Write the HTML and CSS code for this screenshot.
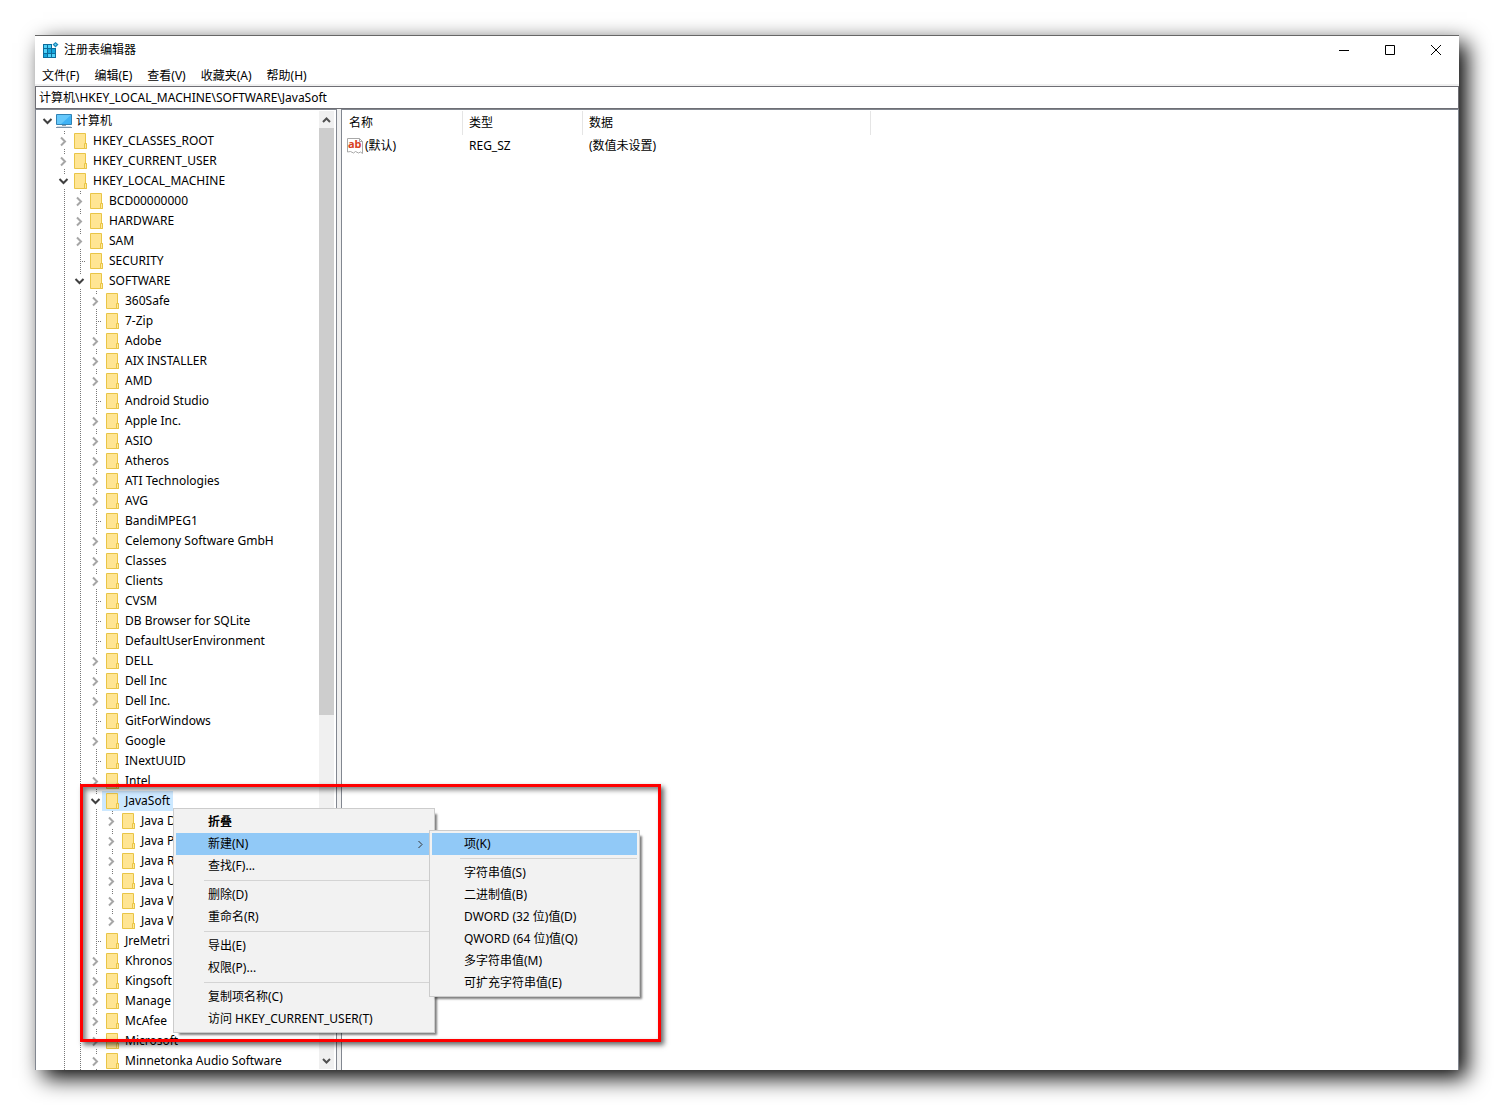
FILE: index.html
```html
<!DOCTYPE html>
<html lang="zh-CN">

<head>
    <meta charset="UTF-8">
    <meta name="viewport" content="width=device-width, initial-scale=1.0">
    <title>注册表编辑器</title>
    <link rel="stylesheet" href="styles.css">
</head>

<body>
    <!-- Shared icons -->
    <svg class="icon-sprite" width="0" height="0" aria-hidden="true">
        <symbol id="folder" viewBox="0 0 13 16">
            <path d="M.5.5h11v10h1v5h-12z" fill="#ffe593" stroke="#e9c547" />
            <path d="M10.5 15.500v-5h2v5z" fill="#ffe99f" stroke="#e9c547" />
        </symbol>
        <symbol id="closed" viewBox="0 0 14 14">
            <path d="M5 3.500l4 4-4 4" fill="none" stroke="#a6a6a6" stroke-width="2" />
        </symbol>
        <symbol id="open" viewBox="0 0 14 14">
            <path d="M3.500 5l4 4 4-4" fill="none" stroke="#404040" stroke-width="2" />
        </symbol>
    </svg>

    <div class="window">
        <header class="title-bar">
            <svg class="app-icon" width="16" height="16" viewBox="0 0 16 16">
                <path d="M0 2h9v4h4v10H0z" fill="#0c6c9c" />
                <path d="M1 3h3v3H1zM5 3h3v3H5zM1 7h3v4H1zM5 12h3v3H5zM9 12h3v3H9z" fill="#4fd0f7" />
                <path d="M5 7h3v4H5zM9 7h3v4H9zM1 12h3v3H1z" fill="#14a5dc" />
                <path d="M12.500 0l3 2.500-3 3-3-3z" fill="#1b87b8" />
                <path d="M12.500 1.500l1.200 1-1.200 1.200-1.200-1.200z" fill="#6fd8f7" />
            </svg>
            <h1>注册表编辑器</h1>
            <div class="window-buttons">
                <button type="button" aria-label="最小化">
                    <svg width="10" height="10" viewBox="0 0 10 10"><path d="M0 5.500h10" /></svg>
                </button>
                <button type="button" aria-label="最大化">
                    <svg width="10" height="10" viewBox="0 0 10 10"><path d="M.5.5h9v9h-9z" /></svg>
                </button>
                <button type="button" aria-label="关闭">
                    <svg width="10" height="10" viewBox="0 0 10 10"><path d="M0 0l10 10M10 0L0 10" /></svg>
                </button>
            </div>
        </header>

        <nav class="menu-bar">
            <button type="button">文件(F)</button>
            <button type="button">编辑(E)</button>
            <button type="button">查看(V)</button>
            <button type="button">收藏夹(A)</button>
            <button type="button">帮助(H)</button>
        </nav>

        <input class="address" type="text" aria-label="地址" value="计算机\HKEY_LOCAL_MACHINE\SOFTWARE\JavaSoft">

        <main class="panes">
            <section class="tree-pane">
                <ul class="tree">
                    <li>
                        <div class="row"><button type="button" class="toggle" aria-label="折叠"><svg><use href="#open" /></svg></button><a href="#" class="key root"><svg class="computer" width="16" height="16" viewBox="0 0 16 16"><path d="M.5 1.500h15v10H.5z" fill="#3fb2f5" stroke="#3183b5" /><path d="M1 2h14L5 11H1z" fill="#65c8fb" /><path d="M6 12h4v1H6z" fill="#8aa0b0" /><path d="M1 13h14v1H1z" fill="#d5dfe8" /><path d="M0 14h16v1H0z" fill="#7d94a8" /></svg>计算机</a></div>
                        <ul>
                            <li><div class="row"><button type="button" class="toggle" aria-label="展开"><svg><use href="#closed" /></svg></button><a href="#" class="key"><svg><use href="#folder" /></svg>HKEY_CLASSES_ROOT</a></div></li>
                            <li><div class="row"><button type="button" class="toggle" aria-label="展开"><svg><use href="#closed" /></svg></button><a href="#" class="key"><svg><use href="#folder" /></svg>HKEY_CURRENT_USER</a></div></li>
                            <li>
                                <div class="row"><button type="button" class="toggle" aria-label="折叠"><svg><use href="#open" /></svg></button><a href="#" class="key"><svg><use href="#folder" /></svg>HKEY_LOCAL_MACHINE</a></div>
                                <ul>
                                    <li><div class="row"><button type="button" class="toggle" aria-label="展开"><svg><use href="#closed" /></svg></button><a href="#" class="key"><svg><use href="#folder" /></svg>BCD00000000</a></div></li>
                                    <li><div class="row"><button type="button" class="toggle" aria-label="展开"><svg><use href="#closed" /></svg></button><a href="#" class="key"><svg><use href="#folder" /></svg>HARDWARE</a></div></li>
                                    <li><div class="row"><button type="button" class="toggle" aria-label="展开"><svg><use href="#closed" /></svg></button><a href="#" class="key"><svg><use href="#folder" /></svg>SAM</a></div></li>
                                    <li><div class="row leaf"><a href="#" class="key"><svg><use href="#folder" /></svg>SECURITY</a></div></li>
                                    <li>
                                        <div class="row"><button type="button" class="toggle" aria-label="折叠"><svg><use href="#open" /></svg></button><a href="#" class="key"><svg><use href="#folder" /></svg>SOFTWARE</a></div>
                                        <ul>
                                            <li><div class="row"><button type="button" class="toggle" aria-label="展开"><svg><use href="#closed" /></svg></button><a href="#" class="key"><svg><use href="#folder" /></svg>360Safe</a></div></li>
                                            <li><div class="row leaf"><a href="#" class="key"><svg><use href="#folder" /></svg>7-Zip</a></div></li>
                                            <li><div class="row"><button type="button" class="toggle" aria-label="展开"><svg><use href="#closed" /></svg></button><a href="#" class="key"><svg><use href="#folder" /></svg>Adobe</a></div></li>
                                            <li><div class="row"><button type="button" class="toggle" aria-label="展开"><svg><use href="#closed" /></svg></button><a href="#" class="key"><svg><use href="#folder" /></svg>AIX INSTALLER</a></div></li>
                                            <li><div class="row"><button type="button" class="toggle" aria-label="展开"><svg><use href="#closed" /></svg></button><a href="#" class="key"><svg><use href="#folder" /></svg>AMD</a></div></li>
                                            <li><div class="row leaf"><a href="#" class="key"><svg><use href="#folder" /></svg>Android Studio</a></div></li>
                                            <li><div class="row"><button type="button" class="toggle" aria-label="展开"><svg><use href="#closed" /></svg></button><a href="#" class="key"><svg><use href="#folder" /></svg>Apple Inc.</a></div></li>
                                            <li><div class="row"><button type="button" class="toggle" aria-label="展开"><svg><use href="#closed" /></svg></button><a href="#" class="key"><svg><use href="#folder" /></svg>ASIO</a></div></li>
                                            <li><div class="row"><button type="button" class="toggle" aria-label="展开"><svg><use href="#closed" /></svg></button><a href="#" class="key"><svg><use href="#folder" /></svg>Atheros</a></div></li>
                                            <li><div class="row"><button type="button" class="toggle" aria-label="展开"><svg><use href="#closed" /></svg></button><a href="#" class="key"><svg><use href="#folder" /></svg>ATI Technologies</a></div></li>
                                            <li><div class="row"><button type="button" class="toggle" aria-label="展开"><svg><use href="#closed" /></svg></button><a href="#" class="key"><svg><use href="#folder" /></svg>AVG</a></div></li>
                                            <li><div class="row leaf"><a href="#" class="key"><svg><use href="#folder" /></svg>BandiMPEG1</a></div></li>
                                            <li><div class="row"><button type="button" class="toggle" aria-label="展开"><svg><use href="#closed" /></svg></button><a href="#" class="key"><svg><use href="#folder" /></svg>Celemony Software GmbH</a></div></li>
                                            <li><div class="row"><button type="button" class="toggle" aria-label="展开"><svg><use href="#closed" /></svg></button><a href="#" class="key"><svg><use href="#folder" /></svg>Classes</a></div></li>
                                            <li><div class="row"><button type="button" class="toggle" aria-label="展开"><svg><use href="#closed" /></svg></button><a href="#" class="key"><svg><use href="#folder" /></svg>Clients</a></div></li>
                                            <li><div class="row leaf"><a href="#" class="key"><svg><use href="#folder" /></svg>CVSM</a></div></li>
                                            <li><div class="row leaf"><a href="#" class="key"><svg><use href="#folder" /></svg>DB Browser for SQLite</a></div></li>
                                            <li><div class="row leaf"><a href="#" class="key"><svg><use href="#folder" /></svg>DefaultUserEnvironment</a></div></li>
                                            <li><div class="row"><button type="button" class="toggle" aria-label="展开"><svg><use href="#closed" /></svg></button><a href="#" class="key"><svg><use href="#folder" /></svg>DELL</a></div></li>
                                            <li><div class="row"><button type="button" class="toggle" aria-label="展开"><svg><use href="#closed" /></svg></button><a href="#" class="key"><svg><use href="#folder" /></svg>Dell Inc</a></div></li>
                                            <li><div class="row"><button type="button" class="toggle" aria-label="展开"><svg><use href="#closed" /></svg></button><a href="#" class="key"><svg><use href="#folder" /></svg>Dell Inc.</a></div></li>
                                            <li><div class="row leaf"><a href="#" class="key"><svg><use href="#folder" /></svg>GitForWindows</a></div></li>
                                            <li><div class="row"><button type="button" class="toggle" aria-label="展开"><svg><use href="#closed" /></svg></button><a href="#" class="key"><svg><use href="#folder" /></svg>Google</a></div></li>
                                            <li><div class="row leaf"><a href="#" class="key"><svg><use href="#folder" /></svg>INextUUID</a></div></li>
                                            <li><div class="row"><button type="button" class="toggle" aria-label="展开"><svg><use href="#closed" /></svg></button><a href="#" class="key"><svg><use href="#folder" /></svg>Intel</a></div></li>
                                            <li>
                                                <div class="row"><button type="button" class="toggle" aria-label="折叠"><svg><use href="#open" /></svg></button><a href="#" class="key selected"><svg><use href="#folder" /></svg>JavaSoft</a></div>
                                                <ul class="ends">
                                                    <li><div class="row"><button type="button" class="toggle" aria-label="展开"><svg><use href="#closed" /></svg></button><a href="#" class="key"><svg><use href="#folder" /></svg>Java D</a></div></li>
                                                    <li><div class="row"><button type="button" class="toggle" aria-label="展开"><svg><use href="#closed" /></svg></button><a href="#" class="key"><svg><use href="#folder" /></svg>Java P</a></div></li>
                                                    <li><div class="row"><button type="button" class="toggle" aria-label="展开"><svg><use href="#closed" /></svg></button><a href="#" class="key"><svg><use href="#folder" /></svg>Java R</a></div></li>
                                                    <li><div class="row"><button type="button" class="toggle" aria-label="展开"><svg><use href="#closed" /></svg></button><a href="#" class="key"><svg><use href="#folder" /></svg>Java U</a></div></li>
                                                    <li><div class="row"><button type="button" class="toggle" aria-label="展开"><svg><use href="#closed" /></svg></button><a href="#" class="key"><svg><use href="#folder" /></svg>Java W</a></div></li>
                                                    <li><div class="row"><button type="button" class="toggle" aria-label="展开"><svg><use href="#closed" /></svg></button><a href="#" class="key"><svg><use href="#folder" /></svg>Java W</a></div></li>
                                                </ul>
                                            </li>
                                            <li><div class="row leaf"><a href="#" class="key"><svg><use href="#folder" /></svg>JreMetri</a></div></li>
                                            <li><div class="row"><button type="button" class="toggle" aria-label="展开"><svg><use href="#closed" /></svg></button><a href="#" class="key"><svg><use href="#folder" /></svg>Khronos</a></div></li>
                                            <li><div class="row"><button type="button" class="toggle" aria-label="展开"><svg><use href="#closed" /></svg></button><a href="#" class="key"><svg><use href="#folder" /></svg>Kingsoft</a></div></li>
                                            <li><div class="row"><button type="button" class="toggle" aria-label="展开"><svg><use href="#closed" /></svg></button><a href="#" class="key"><svg><use href="#folder" /></svg>Manage</a></div></li>
                                            <li><div class="row"><button type="button" class="toggle" aria-label="展开"><svg><use href="#closed" /></svg></button><a href="#" class="key"><svg><use href="#folder" /></svg>McAfee</a></div></li>
                                            <li><div class="row"><button type="button" class="toggle" aria-label="展开"><svg><use href="#closed" /></svg></button><a href="#" class="key"><svg><use href="#folder" /></svg>Microsoft</a></div></li>
                                            <li><div class="row"><button type="button" class="toggle" aria-label="展开"><svg><use href="#closed" /></svg></button><a href="#" class="key"><svg><use href="#folder" /></svg>Minnetonka Audio Software</a></div></li>
                                        </ul>
                                    </li>
                                </ul>
                            </li>
                        </ul>
                    </li>
                </ul>

                <div class="scrollbar">
                    <button type="button" aria-label="向上滚动"><svg width="9" height="6" viewBox="0 0 9 6"><path d="M1 5l3.500-3.500L8 5" /></svg></button>
                    <div class="track"><div class="thumb"></div></div>
                    <button type="button" aria-label="向下滚动"><svg width="9" height="6" viewBox="0 0 9 6"><path d="M1 1l3.500 3.500L8 1" /></svg></button>
                </div>
            </section>

            <section class="value-pane">
                <table>
                    <thead>
                        <tr>
                            <th class="col-name">名称</th>
                            <th class="col-type">类型</th>
                            <th class="col-data">数据</th>
                            <td></td>
                        </tr>
                    </thead>
                    <tbody>
                        <tr>
                            <td class="value-name">
                                <div>
                                    <svg width="16" height="16" viewBox="0 0 16 16">
                                        <path d="M.5.5h12l3 3v12l-2-1.500-2 1-3-1.500-2 1.500-3-1.500-3 .5z" fill="#fff" stroke="#a8a8a8" />
                                        <path d="M12.500.5v3h3" fill="none" stroke="#a8a8a8" />
                                        <text x="1" y="10">ab</text>
                                    </svg>
                                    (默认)
                                </div>
                            </td>
                            <td>REG_SZ</td>
                            <td>(数值未设置)</td>
                            <td></td>
                        </tr>
                    </tbody>
                </table>
            </section>
        </main>

        <!-- Right click menu of the selected key -->
        <div class="menu context-menu">
            <button type="button" class="default">折叠</button>
            <div class="has-submenu">
                <button type="button" class="active">新建(N)<svg width="5" height="9" viewBox="0 0 5 9"><path d="M.5 1L4 4.500.5 8" /></svg></button>
                <div class="menu submenu">
                    <button type="button" class="active">项(K)</button>
                    <hr>
                    <button type="button">字符串值(S)</button>
                    <button type="button">二进制值(B)</button>
                    <button type="button">DWORD (32 位)值(D)</button>
                    <button type="button">QWORD (64 位)值(Q)</button>
                    <button type="button">多字符串值(M)</button>
                    <button type="button">可扩充字符串值(E)</button>
                </div>
            </div>
            <button type="button">查找(F)...</button>
            <hr>
            <button type="button">删除(D)</button>
            <button type="button">重命名(R)</button>
            <hr>
            <button type="button">导出(E)</button>
            <button type="button">权限(P)...</button>
            <hr>
            <button type="button">复制项名称(C)</button>
            <button type="button">访问 HKEY_CURRENT_USER(T)</button>
        </div>

        <div class="highlight-box"></div>
    </div>
</body>

</html>
```

FILE: styles.css
```css
* {
    box-sizing: border-box;
}

body {
    margin: 0;
    padding: 35px;
    height: 100vh;
    background-color: white;
    color: black;
    font-family: "Noto Sans", "Noto Sans CJK SC", sans-serif;
    font-size: 12px;
    line-height: 20px;
}

button {
    margin: 0;
    padding: 0;
    border: 0;
    background: none;
    color: inherit;
    font: inherit;
}

ul {
    margin: 0;
    padding: 0;
    list-style: none;
}

.icon-sprite {
    position: absolute;
}

/* The window */
.window {
    position: relative;
    display: flex;
    flex-direction: column;
    height: 100%;
    background-color: white;
    border-top: 1px solid #666;
    box-shadow: 8px 8px 21px black;
}

.title-bar {
    display: flex;
    align-items: center;
    height: 28px;
    padding-left: 8px;
}

.title-bar h1 {
    flex: 1;
    margin: 0 0 0 5px;
    font-size: 12px;
    font-weight: normal;
}

.window-buttons {
    display: flex;
}

.window-buttons button {
    display: flex;
    align-items: center;
    justify-content: center;
    width: 46px;
    height: 28px;
}

.window-buttons path {
    fill: none;
    stroke: black;
}

.menu-bar {
    display: flex;
    gap: 1px;
    height: 22px;
    border-bottom: 2px solid #f0f0f0;
}

.menu-bar button {
    padding: 2px 7px 0;
    line-height: 20px;
}

.address {
    height: 23px;
    padding: 0 3px 2px;
    border: 1px solid #6e6e74;
    background-color: white;
    color: black;
    font: inherit;
}

/* Both panes under the address bar */
.panes {
    display: flex;
    flex: 1;
    min-height: 0;
    background-color: #f0f0f0;
}

.tree-pane {
    display: flex;
    width: 302px;
    margin-right: 4px;
    border: 1px solid #828790;
    border-bottom: 0;
    background-color: white;
}

.tree {
    flex: 1;
    padding: 1px 0 0 4px;
    overflow: hidden;
    white-space: nowrap;
}

/* Dotted line that joins the keys of one level */
.tree ul {
    padding-left: 16px;
    background: repeating-linear-gradient(#777 0 1px, transparent 1px 2px) 24px 0 / 1px 100% no-repeat;
}

.tree ul.ends {
    background-size: 1px calc(100% - 10px);
}

.row {
    display: flex;
    align-items: center;
    height: 20px;
}

.row.leaf::before {
    content: "";
    width: 6px;
    height: 1px;
    margin-left: 8px;
    background: repeating-linear-gradient(90deg, #777 0 1px, transparent 1px 2px);
}

.toggle {
    width: 14px;
    height: 14px;
    background-color: white;
}

.toggle svg {
    display: block;
    width: 14px;
    height: 14px;
}

.key {
    display: flex;
    align-items: center;
    gap: 6px;
    height: 20px;
    padding: 0 3px 0 4px;
    color: black;
    text-decoration: none;
}

.key svg {
    width: 13px;
    height: 16px;
}

.key.root {
    gap: 4px;
    padding-left: 2px;
}

.key .computer {
    width: 16px;
}

.key.selected {
    background-color: #cce8ff;
}

.scrollbar {
    display: flex;
    flex-direction: column;
    width: 17px;
    padding: 1px 2px 1px 0;
}

.scrollbar button {
    display: flex;
    align-items: center;
    justify-content: center;
    height: 17px;
    background-color: #f0f0f0;
}

.scrollbar path {
    fill: none;
    stroke: #505050;
    stroke-width: 2;
}

.track {
    flex: 1;
    background-color: #f0f0f0;
}

.thumb {
    height: 587px;
    background-color: #cdcdcd;
}

.value-pane {
    flex: 1;
    padding: 1px 0 0 1px;
    border: 1px solid #828790;
    border-bottom: 0;
    background-color: white;
}

.value-pane table {
    width: 100%;
    table-layout: fixed;
    border-collapse: separate;
    border-spacing: 0;
}

.value-pane th,
.value-pane td {
    height: 22px;
    padding: 0 6px;
    font-weight: normal;
    text-align: left;
}

.value-pane th {
    height: 24px;
    border-right: 1px solid #e5e5e5;
}

.col-name,
.col-type {
    width: 120px;
}

.col-data {
    width: 288px;
}

.value-pane .value-name {
    padding: 0 4px;
}

.value-name div {
    display: flex;
    align-items: center;
    gap: 2px;
}

.value-name text {
    fill: #d8431f;
    font-family: "Noto Sans", sans-serif;
    font-size: 11px;
    font-weight: bold;
}

/* Popup menus */
.menu {
    position: absolute;
    padding: 2px;
    border: 1px solid #ccc;
    background-color: #f2f2f2;
    box-shadow: 4px 4px 2px -2px rgba(0, 0, 0, .5);
}

.menu button {
    display: flex;
    align-items: center;
    justify-content: space-between;
    width: 100%;
    height: 22px;
    padding: 0 9px 0 32px;
    text-align: left;
    white-space: nowrap;
}

.menu button.active {
    background-color: #91c9f7;
}

.menu button.default {
    font-weight: bold;
}

.menu hr {
    height: 1px;
    margin: 3px 0 3px 28px;
    border: 0;
    background-color: #d4d4d4;
}

.menu path {
    fill: none;
    stroke: #333;
}

.context-menu {
    top: 772px;
    left: 138px;
    width: 262px;
}

.has-submenu {
    position: relative;
}

.submenu {
    top: -3px;
    left: 253px;
    width: 211px;
}

/* Red frame round the steps to follow */
.highlight-box {
    position: absolute;
    top: 748px;
    left: 45px;
    width: 581px;
    height: 258px;
    border: 3px solid red;
    box-shadow: 3px 3px 5px rgba(0, 0, 0, .6), inset 3px 3px 5px rgba(0, 0, 0, .5);
    pointer-events: none;
}
```
